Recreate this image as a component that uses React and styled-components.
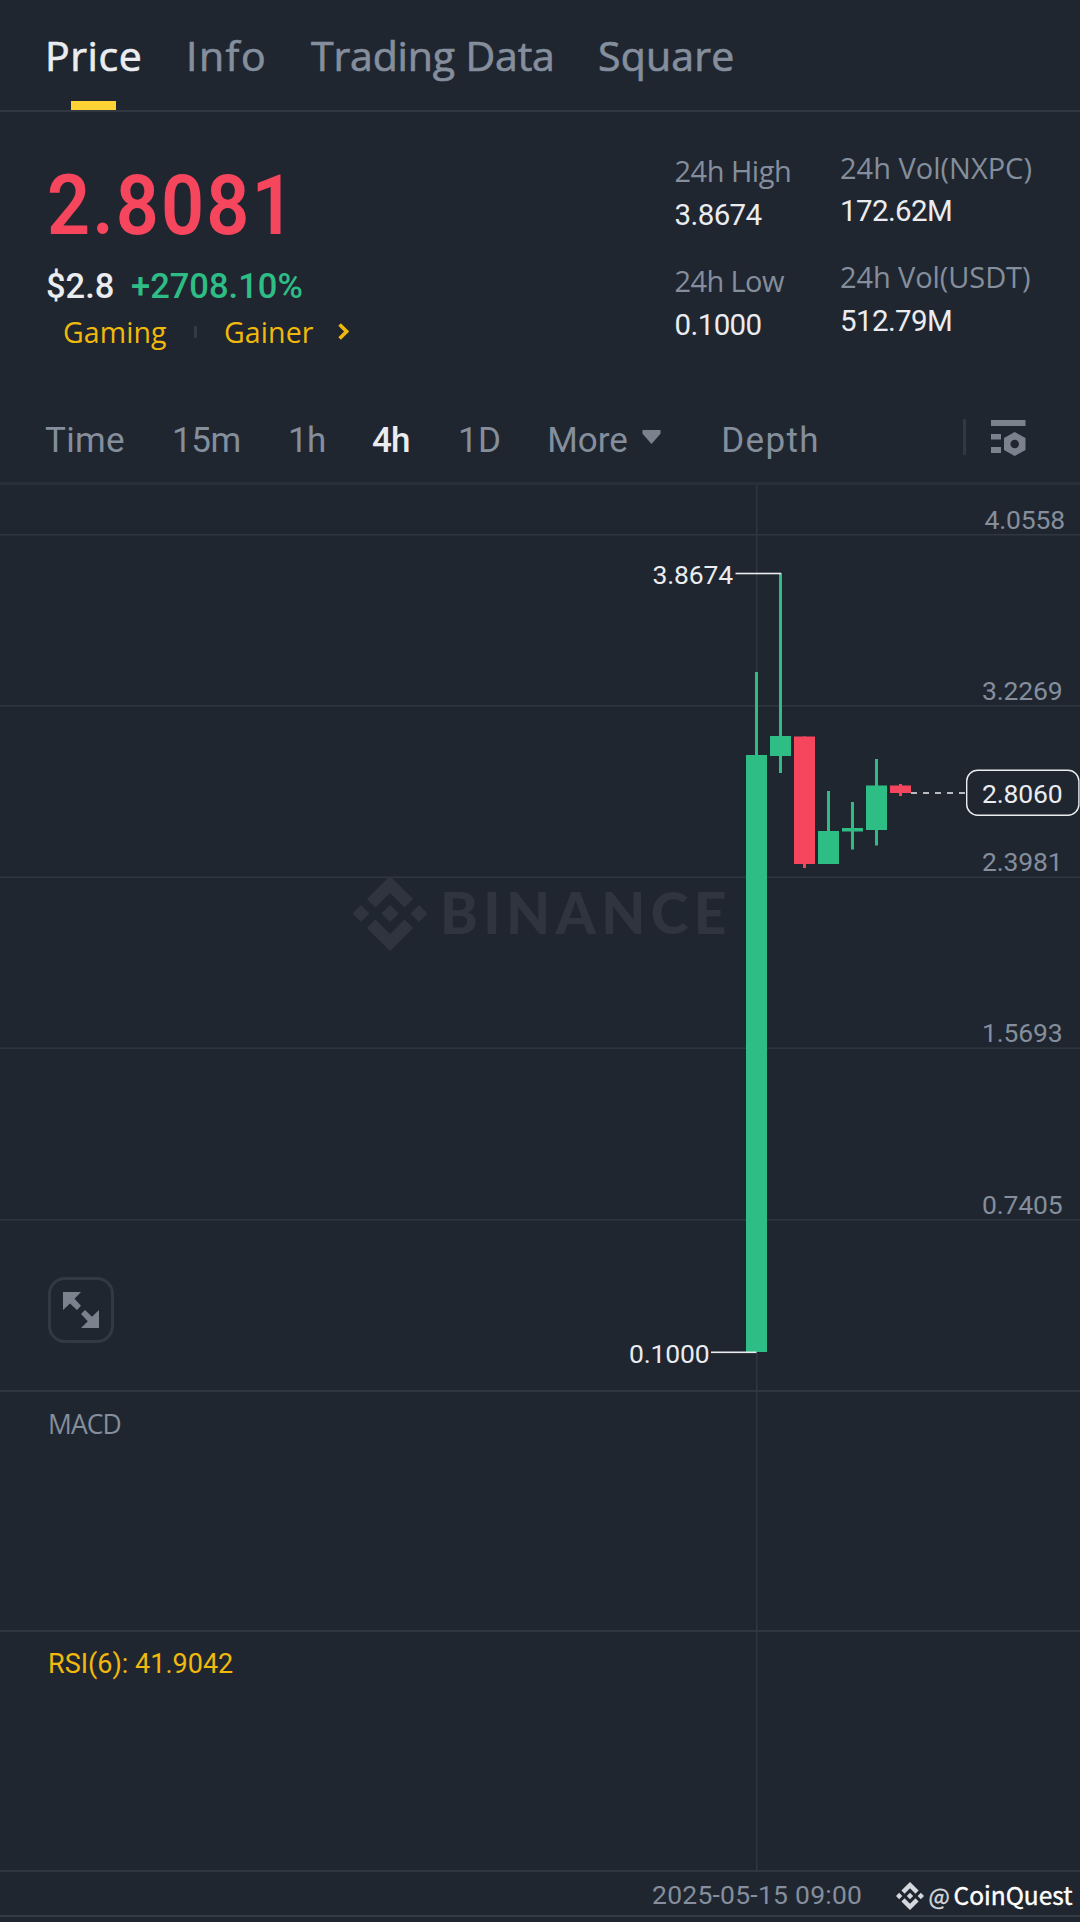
import React from "react";
import styled, { createGlobalStyle } from "styled-components";

const c = {
  bg: "#202630",
  line: "#30363f",
  softLine: "#292f39",
  muted: "#848e9c",
  icon: "#7b818d",
  text: "#eaecef",
  green: "#2ebd85",
  red: "#f6465d",
  gold: "#f0b90b",
  accent: "#fdd235",
  mark: "#2f343f",
};

const sans = '"Open Sans", sans-serif';
const din = 'Roboto, sans-serif';

const GlobalStyle = createGlobalStyle`
  body {
    margin: 0;
    background: ${c.bg};
  }
`;

const Page = styled.main`
  width: 1080px;
  height: 1922px;
  overflow: hidden;
  display: flex;
  flex-direction: column;
  background: ${c.bg};
  color: ${c.text};
  font-family: ${din};
`;

/* Top tabs */
const TabBar = styled.nav`
  box-sizing: border-box;
  flex: none;
  display: grid;
  grid-template-columns: 141px 125px 287px auto;
  height: 112px;
  padding: 30px 0 0 45px;
  border-bottom: 2px solid #313740;
`;

const Tab = styled.div`
  position: relative;
  font: 500 41px/50px ${sans};
  letter-spacing: ${(p) => p.$track}px;
  color: ${(p) => (p.$active ? c.text : c.muted)};
  -webkit-text-stroke: 0.7px currentColor;
  white-space: nowrap;

  &::after {
    content: "";
    display: ${(p) => (p.$active ? "block" : "none")};
    position: absolute;
    left: 26px;
    bottom: 0;
    width: 45px;
    height: 9px;
    background: ${c.accent};
  }
`;

/* Price summary */
const Summary = styled.section`
  flex: none;
  display: grid;
  grid-template-columns: 674.5px 165.5px auto;
  height: 298px;
`;

const Quote = styled.div`
  padding: 54px 0 0 46px;
`;

const LastPrice = styled.div`
  margin-left: 1px;
  font: 600 83px/80px ${din};
  letter-spacing: 2.3px;
  color: ${c.red};
  transform: scaleX(0.91);
  transform-origin: 0 50%;
  white-space: nowrap;
`;

const Change = styled.div`
  display: grid;
  grid-template-columns: 85px auto;
  margin-top: 19.7px;
  font: 500 34.5px/40px ${din};
`;

const Up = styled.span`
  color: ${c.green};
`;

const Tags = styled.div`
  display: grid;
  grid-template-columns: 131px 30px 114px auto;
  align-items: center;
  margin-top: 8.2px;
  padding-left: 17px;
  font: 400 28.5px/36px ${sans};
  letter-spacing: 0.1px;
  color: ${c.gold};
`;

const TagDivider = styled.i`
  width: 3px;
  height: 12px;
  background: #343a45;
`;

const Stats = styled.div`
  padding-top: ${(p) => p.$top}px;
  display: flex;
  flex-direction: column;
  gap: 30px;
`;

const Stat = styled.div`
  display: flex;
  flex-direction: column;
  gap: ${(p) => p.$gap}px;
  white-space: nowrap;
`;

const StatLabel = styled.span`
  font: 400 29px/36px ${sans};
  letter-spacing: ${(p) => p.$track}px;
  color: ${c.muted};
`;

const StatValue = styled.span`
  font: 400 29.5px/36px ${din};
  letter-spacing: -0.6px;
`;

/* Interval selector */
const Intervals = styled.div`
  box-sizing: border-box;
  flex: none;
  display: grid;
  grid-template-columns: 127px 116px 84px 86px 89.3px 174px 241.7px 28px auto;
  height: 75px;
  padding: 10px 0 0 45px;
  border-bottom: 3px solid ${c.softLine};
  font: 400 35px/42px ${din};
  color: ${c.muted};
`;

const Interval = styled.span`
  display: flex;
  font-weight: ${(p) => (p.$active ? 500 : 400)};
  color: ${(p) => (p.$active ? c.text : "inherit")};
  letter-spacing: ${(p) => p.$track || 0}px;
`;

const Caret = styled.svg`
  margin: 10px 0 0 14.5px;
`;

const ToolDivider = styled.i`
  width: 3px;
  height: 36px;
  margin-top: -1px;
  background: #323843;
`;

/* Chart area */
const ChartPane = styled.section`
  position: relative;
  flex: none;
  height: 905px;
  border-bottom: 2px solid ${c.line};
`;

const ChartSvg = styled.svg`
  display: block;
`;

const AxisText = styled.text`
  font: 400 26.5px ${din};
  letter-spacing: -0.15px;
  fill: ${(p) => (p.$bright ? c.text : c.muted)};
`;

const WatermarkText = styled.text`
  font: 900 57px Lato, sans-serif;
  letter-spacing: 5.5px;
  fill: ${c.mark};
`;

const ExpandButton = styled.button`
  position: absolute;
  left: 48px;
  bottom: 47px;
  box-sizing: border-box;
  width: 66px;
  height: 66px;
  padding: 0;
  display: grid;
  place-items: center;
  border: 3px solid #333944;
  border-radius: 17px;
  background: transparent;
`;

const IndicatorPane = styled.section`
  box-sizing: border-box;
  flex: none;
  height: 240px;
  padding: 14px 0 0 48px;
  border-bottom: 2px solid ${c.line};
  background: linear-gradient(${c.line}, ${c.line}) 756px 0 / 1.5px 100% no-repeat;
  font: 400 ${(p) => p.$size}px/36px ${(p) => p.$font};
  letter-spacing: ${(p) => p.$track}px;
  color: ${(p) => p.$color};
`;

const TimeAxis = styled.footer`
  box-sizing: border-box;
  flex: none;
  display: grid;
  grid-template-columns: 244px 32.5px 25px auto;
  height: 45px;
  padding-left: 652px;
  border-bottom: 2px solid #343a44;
  line-height: 36px;
  white-space: nowrap;
`;

const DateLabel = styled.span`
  padding-top: 4.5px;
  font-size: 26.5px;
  letter-spacing: 0.24px;
  color: ${c.muted};
`;

const FooterMark = styled.span`
  padding-top: 10px;
  line-height: 0;
`;

const Handle = styled.span`
  padding-top: 5px;
  font: 400 ${(p) => (p.$at ? 22.5 : 24.5)}px/36px "Noto Sans CJK SC", sans-serif;
  -webkit-text-stroke: 0.4px currentColor;
  color: ${(p) => (p.$at ? "#d5d7dc" : "#ffffff")};
`;

function BinanceMark({ size, x, y, fill }) {
  return (
    <svg x={x} y={y} width={size} height={size} viewBox="0 0 126.61 126.61" fill={fill}>
      <path d="M38.73 53.2l24.59-24.58 24.6 24.6 14.3-14.31L63.32 0 24.42 38.9zM0 63.31l14.3-14.31 14.31 14.31-14.31 14.3zM38.73 73.41L63.32 98l24.6-24.6 14.31 14.29-38.91 38.91-38.91-38.88zM98 63.31L112.3 49l14.31 14.3-14.31 14.32zM77.83 63.3L63.32 48.78 48.8 63.3l14.52 14.52z" />
    </svg>
  );
}

const tabs = [
  { label: "Price", active: true, track: 0.6 },
  { label: "Info", track: 1.5 },
  { label: "Trading Data", track: -0.15 },
  { label: "Square", track: 0.2 },
];

const gridLines = [49, 220, 391.5, 562.5, 734];

const axisLabels = [
  ["4.0558", 984.5, 43.5],
  ["3.2269", 982, 214.5],
  ["2.3981", 982, 385.5],
  ["1.5693", 982, 557],
  ["0.7405", 982, 728.5],
];

/* x: body left, top/bottom: body range, high/low: wick range */
const candles = [
  { x: 746, top: 270, bottom: 867, high: 187, low: 867, up: true },
  { x: 770, top: 251, bottom: 271, high: 88, low: 288, up: true },
  { x: 794, top: 251.5, bottom: 379, high: 251.5, low: 383 },
  { x: 818, top: 346, bottom: 379, high: 306, low: 379, up: true },
  { x: 842, top: 343, bottom: 346.5, high: 317, low: 364.5, up: true },
  { x: 866, top: 300.5, bottom: 345, high: 274, low: 360.5, up: true },
  { x: 890, top: 300.5, bottom: 308, high: 299, low: 311 },
];

function PriceChart() {
  return (
    <ChartSvg width="1080" height="905" viewBox="0 0 1080 905">
      {gridLines.map((y) => (
        <rect key={y} x="0" y={y} width="1080" height="1.5" fill={c.line} />
      ))}
      <rect x="756" y="0" width="1.5" height="905" fill={c.line} />
      <BinanceMark x={352.5} y={391} size={75} fill={c.mark} />
      <WatermarkText x="440" y="449">BINANCE</WatermarkText>
      {candles.map((k) => (
        <g key={k.x} fill={k.up ? c.green : c.red}>
          <rect x={k.x + 9} y={k.high} width="3" height={k.low - k.high} />
          <rect x={k.x} y={k.top} width="21" height={k.bottom - k.top} />
        </g>
      ))}
      {axisLabels.map(([label, x, y]) => (
        <AxisText key={label} x={x} y={y}>{label}</AxisText>
      ))}
      <AxisText $bright x="652.5" y="98.5">3.8674</AxisText>
      <rect x="735.5" y="87.7" width="45.5" height="1.6" fill={c.text} />
      <AxisText $bright x="629" y="877.5">0.1000</AxisText>
      <rect x="711" y="866.5" width="45.5" height="1.6" fill={c.text} />
      <path d="M911 308H966" stroke={c.text} strokeWidth="1.5" strokeDasharray="6 6" />
      <rect x="966.7" y="285.2" width="112.2" height="45" rx="11" fill={c.bg} stroke={c.text} strokeWidth="1.4" />
      <AxisText $bright x="982" y="317.5">2.8060</AxisText>
    </ChartSvg>
  );
}

export default function App() {
  return (
    <Page>
      <GlobalStyle />
      <TabBar>
        {tabs.map((t) => (
          <Tab key={t.label} $active={t.active} $track={t.track}>{t.label}</Tab>
        ))}
      </TabBar>

      <Summary>
        <Quote>
          <LastPrice>2.8081</LastPrice>
          <Change>
            <span>$2.8</span>
            <Up>+2708.10%</Up>
          </Change>
          <Tags>
            <span>Gaming</span>
            <TagDivider />
            <span>Gainer</span>
            <svg width="11" height="17" viewBox="0 0 11 17" fill="none" stroke={c.gold} strokeWidth="3.6">
              <path d="M1.6 1.4L8.6 8.5L1.6 15.6" />
            </svg>
          </Tags>
        </Quote>
        <Stats $top={40.7}>
          <Stat $gap={8}>
            <StatLabel $track={-0.5}>24h High</StatLabel>
            <StatValue>3.8674</StatValue>
          </Stat>
          <Stat $gap={8}>
            <StatLabel $track={-0.6}>24h Low</StatLabel>
            <StatValue>0.1000</StatValue>
          </Stat>
        </Stats>
        <Stats $top={37.7}>
          <Stat $gap={7.5}>
            <StatLabel>24h Vol(NXPC)</StatLabel>
            <StatValue>172.62M</StatValue>
          </Stat>
          <Stat $gap={7.5}>
            <StatLabel $track={-0.1}>24h Vol(USDT)</StatLabel>
            <StatValue>512.79M</StatValue>
          </Stat>
        </Stats>
      </Summary>

      <Intervals>
        <Interval $track={0.3}>Time</Interval>
        <Interval $track={-0.4}>15m</Interval>
        <Interval $track={-0.6}>1h</Interval>
        <Interval $active $track={-0.9}>4h</Interval>
        <Interval $track={0.3}>1D</Interval>
        <Interval>
          More
          <Caret width="19" height="14" viewBox="0 0 19 14" fill={c.icon}>
            <path d="M0.5 0H18.5V3.8L9.5 14L0.5 3.8Z" />
          </Caret>
        </Interval>
        <Interval $track={1.3}>Depth</Interval>
        <ToolDivider />
        <svg width="36" height="37" viewBox="0 0 36 37" fill={c.icon}>
          <path d="M0 0H34.5V6H0ZM0 14H10V19.5H0ZM0 27H10V33H0Z" />
          <path fillRule="evenodd" d="M23.7 12L34.5 18V30L23.7 36L13 30V18ZM23.7 19.7A4.3 4.3 0 1 0 23.7 28.3A4.3 4.3 0 1 0 23.7 19.7Z" />
        </svg>
      </Intervals>

      <ChartPane>
        <PriceChart />
        <ExpandButton aria-label="Expand">
          <svg width="36" height="36" viewBox="0 0 36 36" fill={c.icon}>
            <path d="M0 0H18L11.5 6.8L18 13.8L14 18L7 11.4L0 18Z" />
            <path d="M36 36H18L24.8 29.2L18 22L22 18L29 24.8L36 18Z" />
          </svg>
        </ExpandButton>
      </ChartPane>

      <IndicatorPane $size={26.5} $font={sans} $track={-0.9} $color={c.muted}>MACD</IndicatorPane>
      <IndicatorPane $size={27} $font={din} $track={0} $color={c.gold}>RSI(6): 41.9042</IndicatorPane>

      <TimeAxis>
        <DateLabel>2025-05-15 09:00</DateLabel>
        <FooterMark>
          <BinanceMark size={28} fill="#d5d7dc" />
        </FooterMark>
        <Handle $at>@</Handle>
        <Handle>CoinQuest</Handle>
      </TimeAxis>
    </Page>
  );
}
